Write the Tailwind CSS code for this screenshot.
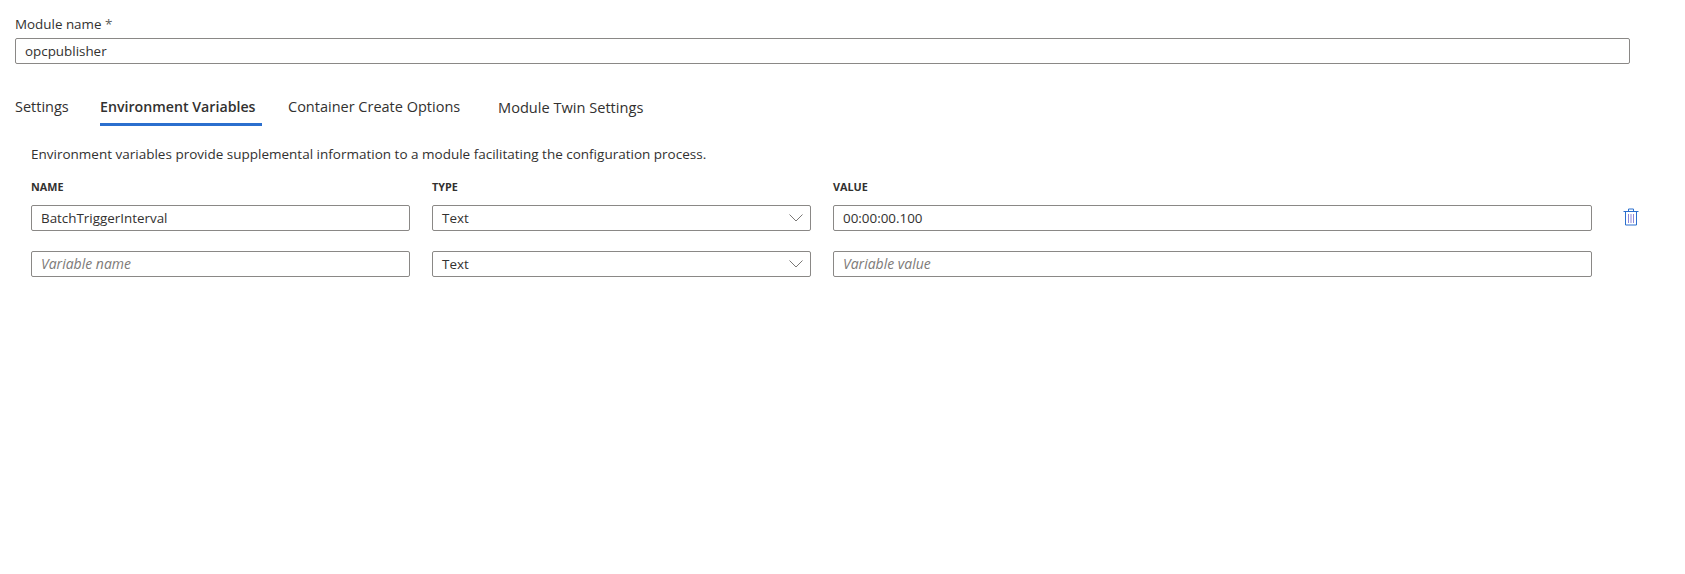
<!DOCTYPE html>
<html>
<head>
<meta charset="utf-8">
<script src="https://cdn.jsdelivr.net/npm/@tailwindcss/browser@4"></script>
</head>
<body class="bg-white">
<div class="w-[1685px] h-[574px] overflow-hidden pl-[15px] pt-[14px] font-['Open_Sans','Noto_Sans',sans-serif] text-[13.4px] text-[#323130]">
  <label class="block h-[24px] leading-[20px]">Module name <span class="text-[#605e5c]">*</span></label>
  <div class="w-[1615px] h-[26px] border border-[#8a8886] rounded-[2px] pl-[9px] leading-[25px]">opcpublisher</div>
  <div class="flex mt-[25px] h-[37px] text-[14.5px] leading-[24px]">
    <div class="w-[85px] pt-[6px]">Settings</div>
    <div class="w-[162px] pt-[6px] font-semibold text-[14.2px] border-b-[3px] border-[#2b6fce]">Environment Variables</div>
    <div class="w-[210px] pt-[6px] ml-[26px]">Container Create Options</div>
    <div class="pt-[6px] text-[14.6px]">Module Twin Settings</div>
  </div>
  <div class="pl-[16px]">
    <p class="mt-[19px] leading-[18px] text-[13.5px]">Environment variables provide supplemental information to a module facilitating the configuration process.</p>
    <div class="flex gap-[22px] mt-[15px] h-[18px] text-[10.8px] font-bold leading-[18px] text-[#323130]">
      <div class="w-[379px]">NAME</div>
      <div class="w-[379px]">TYPE</div>
      <div>VALUE</div>
    </div>
    <div class="flex gap-[22px] items-center mt-[9px]">
      <div class="w-[379px] h-[26px] border border-[#8a8886] rounded-[2px] pl-[9px] leading-[24px]">BatchTriggerInterval</div>
      <div class="w-[379px] h-[26px] border border-[#8a8886] rounded-[2px] pl-[9px] pr-[7px] leading-[24px] flex items-center justify-between">Text
        <svg width="14" height="8" viewBox="0 0 14 8" fill="none" stroke="#7a7876" stroke-width="1"><path d="M0.5 0.5l6.5 6.5 6.5-6.5"/></svg>
      </div>
      <div class="w-[759px] h-[26px] border border-[#8a8886] rounded-[2px] pl-[9px] leading-[24px]">00:00:00.100</div>
      <svg class="ml-[9px] -translate-y-px" width="16" height="18" viewBox="0 0 16 18" fill="none" stroke="#2b6fce" stroke-width="1"><path d="M0.5 3.5h15M5.5 3.5v-2.5h5v2.5M2.5 3.5v13.5h11v-13.5"/><path d="M5.5 6v9M8 6v9M10.5 6v9" stroke="#8f88d8" stroke-width="1"/></svg>
    </div>
    <div class="flex gap-[22px] mt-[20px]">
      <div class="w-[379px] h-[26px] border border-[#8a8886] rounded-[2px] pl-[9px] leading-[24px] italic text-[14px] text-[#7d7a78]">Variable name</div>
      <div class="w-[379px] h-[26px] border border-[#8a8886] rounded-[2px] pl-[9px] pr-[7px] leading-[24px] flex items-center justify-between">Text
        <svg width="14" height="8" viewBox="0 0 14 8" fill="none" stroke="#7a7876" stroke-width="1"><path d="M0.5 0.5l6.5 6.5 6.5-6.5"/></svg>
      </div>
      <div class="w-[759px] h-[26px] border border-[#8a8886] rounded-[2px] pl-[9px] leading-[24px] italic text-[14px] text-[#7d7a78]">Variable value</div>
    </div>
  </div>
</div>
</body>
</html>
